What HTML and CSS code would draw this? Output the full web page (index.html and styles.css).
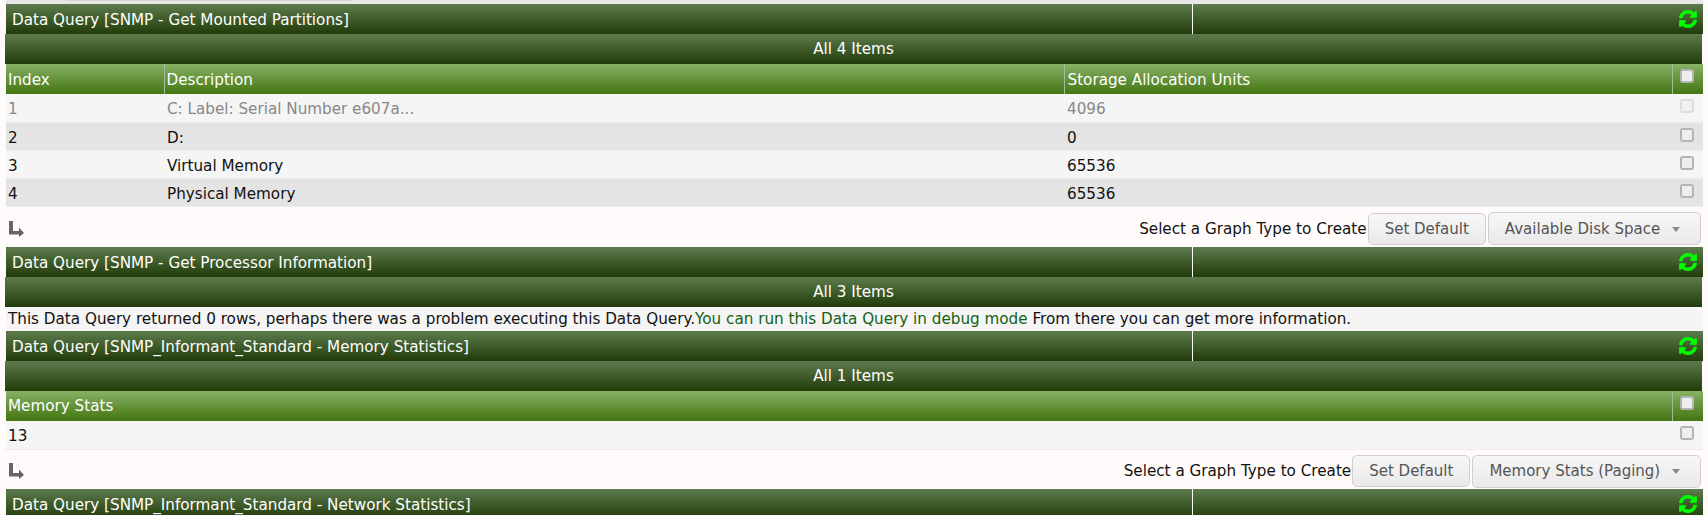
FILE: index.html
```html
<!DOCTYPE html>
<html lang="en">
<head>
  <meta charset="UTF-8">
  <meta name="viewport" content="width=device-width, initial-scale=1.0">
  <title>Data Queries</title>
  <link rel="stylesheet" href="styles.css">
</head>
<body>
  <svg class="icon-defs" width="0" height="0">
    <symbol id="sync" viewBox="0 0 512 512">
      <path d="M370.72 133.28C339.458 104.008 298.888 87.962 255.848 88c-77.458.068-144.328 53.178-162.791 126.85-1.344 5.363-6.122 9.15-11.651 9.15H24.103c-7.498 0-13.194-6.807-11.807-14.176C33.933 94.924 134.813 8 256 8c66.448 0 126.791 26.136 171.315 68.685L463.03 40.97C478.149 25.851 504 36.559 504 57.941V192c0 13.255-10.745 24-24 24H345.941c-21.382 0-32.09-25.851-16.971-40.971l41.75-41.749zM32 296h134.059c21.382 0 32.09 25.851 16.971 40.971l-41.75 41.75c31.262 29.273 71.835 45.319 114.876 45.28 77.418-.07 144.315-53.144 162.787-126.849 1.344-5.363 6.122-9.15 11.651-9.15h57.304c7.498 0 13.194 6.807 11.807 14.176C478.067 417.076 377.187 504 256 504c-66.448 0-126.791-26.136-171.315-68.685L48.97 471.03C33.851 486.149 8 475.441 8 454.059V320c0-13.255 10.745-24 24-24z"/>
    </symbol>
    <symbol id="corner" viewBox="0 0 16 16">
      <path d="M1 0h4v10h6V6.5l5 5.5-5 4v-2.500H1z"/>
    </symbol>
  </svg>

  <div class="page">
    <div class="prev-row"><div class="prev-row-edge"></div></div>

    <!-- Mounted partitions -->
    <section class="query">
      <div class="query-title">
        <div class="query-name">Data Query [SNMP - Get Mounted Partitions]</div>
        <div class="query-tools"><svg class="refresh"><use href="#sync"/></svg></div>
      </div>
      <div class="query-count">All 4 Items</div>
      <table class="items">
        <colgroup>
          <col class="col-index"><col class="col-desc"><col class="col-units"><col class="col-check">
        </colgroup>
        <tr class="head">
          <th>Index</th><th>Description</th><th>Storage Allocation Units</th>
          <th class="check"><input type="checkbox"></th>
        </tr>
        <tr class="disabled">
          <td>1</td><td>C: Label: Serial Number e607a...</td><td>4096</td>
          <td class="check"><input type="checkbox" disabled></td>
        </tr>
        <tr>
          <td>2</td><td>D:</td><td>0</td>
          <td class="check"><input type="checkbox"></td>
        </tr>
        <tr>
          <td>3</td><td>Virtual Memory</td><td>65536</td>
          <td class="check"><input type="checkbox"></td>
        </tr>
        <tr>
          <td>4</td><td>Physical Memory</td><td>65536</td>
          <td class="check"><input type="checkbox"></td>
        </tr>
      </table>
      <div class="query-actions">
        <svg class="corner"><use href="#corner"/></svg>
        <span class="actions-label">Select a Graph Type to Create</span>
        <button class="btn">Set Default</button>
        <button class="btn btn-select">Available Disk Space <span class="caret"></span></button>
      </div>
    </section>

    <!-- Processor information -->
    <section class="query">
      <div class="query-title">
        <div class="query-name">Data Query [SNMP - Get Processor Information]</div>
        <div class="query-tools"><svg class="refresh"><use href="#sync"/></svg></div>
      </div>
      <div class="query-count">All 3 Items</div>
      <div class="query-empty">This Data Query returned 0 rows, perhaps there was a problem executing this Data Query.<a href="#">You can run this Data Query in debug mode</a> From there you can get more information.</div>
    </section>

    <!-- Memory statistics -->
    <section class="query">
      <div class="query-title">
        <div class="query-name">Data Query [SNMP_Informant_Standard - Memory Statistics]</div>
        <div class="query-tools"><svg class="refresh"><use href="#sync"/></svg></div>
      </div>
      <div class="query-count">All 1 Items</div>
      <table class="items items-single">
        <colgroup>
          <col class="col-wide"><col class="col-check">
        </colgroup>
        <tr class="head">
          <th>Memory Stats</th>
          <th class="check"><input type="checkbox"></th>
        </tr>
        <tr>
          <td>13</td>
          <td class="check"><input type="checkbox"></td>
        </tr>
      </table>
      <div class="query-actions query-actions-short">
        <svg class="corner"><use href="#corner"/></svg>
        <span class="actions-label">Select a Graph Type to Create</span>
        <button class="btn">Set Default</button>
        <button class="btn btn-select">Memory Stats (Paging) <span class="caret"></span></button>
      </div>
    </section>

    <!-- Network statistics -->
    <section class="query">
      <div class="query-title">
        <div class="query-name">Data Query [SNMP_Informant_Standard - Network Statistics]</div>
        <div class="query-tools"><svg class="refresh"><use href="#sync"/></svg></div>
      </div>
    </section>
  </div>
</body>
</html>
```

FILE: styles.css
```css
* {
  margin: 0;
  padding: 0;
  box-sizing: border-box;
}

html, body {
  height: 100%;
  overflow: hidden;
}

body {
  background-color: #fffbfa;
  color: #111;
  font-family: "DejaVu Sans", Verdana, sans-serif;
  font-size: 15.2px;
}

.icon-defs {
  position: absolute;
}

.page {
  width: 1698px;
  margin-left: 5px;
}

.prev-row {
  height: 4px;
  margin-left: 1px;
  background-color: #e6e6e6;
}

.prev-row-edge {
  width: 286px;
  height: 1px;
  margin-left: 60px;
  background-color: #d6d6d6;
}

/* Query title bar */
.query-title {
  display: grid;
  grid-template-columns: 1186px 1fr;
  height: 30px;
  margin-left: 1px;
  background: linear-gradient(#5d7b4d, #213c09);
  color: #fff;
  line-height: 32px;
}

.query-name {
  height: 30px;
  padding-left: 6px;
}

.query-tools {
  display: flex;
  justify-content: flex-end;
  align-items: center;
  padding-right: 6px;
  border-left: 1px solid #fff;
}

.refresh {
  width: 18px;
  height: 18px;
  fill: #00ff00;
  stroke: #00ff00;
  stroke-width: 24px;
}

.query-count {
  height: 30px;
  margin-right: 1px;
  background: linear-gradient(#5d7b4d, #213c09);
  color: #fff;
  line-height: 31px;
  text-align: center;
}

/* Item tables */
.items {
  width: 1697px;
  margin-left: 1px;
  border-collapse: collapse;
  table-layout: fixed;
}

.col-index { width: 158px; }
.col-desc { width: 900px; }
.col-check { width: 31px; }

.items th,
.items td {
  padding: 2px 2px 0;
  text-align: left;
  font-weight: normal;
}

.items th {
  height: 30px;
  border-left: 1px solid #a9b8a0;
  background: linear-gradient(#87b166, #437510);
  color: #fff;
}

.items th:first-child {
  border-left: none;
}

.items-single th {
  padding-top: 0;
}

.items td {
  height: 28px;
  padding-top: 3px;
  border-bottom: 1px solid #ececec;
}

.items-single td {
  height: 29px;
}

.items tr:nth-child(even) {
  background-color: #f5f5f5;
}

.items tr:nth-child(odd) {
  background-color: #e4e4e4;
}

.items td:nth-child(2) {
  padding-left: 3px;
}

.items th:nth-child(3),
.items td:nth-child(3) {
  padding-left: 3px;
}

.items .disabled td {
  color: #888;
}

.items .check {
  padding: 5px 0 0 7px;
  vertical-align: top;
}

.items td.check {
  padding-left: 8px;
}

input[type="checkbox"] {
  display: block;
  width: 14px;
  height: 14px;
  appearance: none;
  border: 2px solid #b4b4b4;
  border-radius: 3px;
  background-color: #eeeeee;
}

input[type="checkbox"]:disabled {
  border-color: #dddddd;
  background-color: #f0f0f0;
}

/* Actions under a table */
.query-actions {
  display: flex;
  justify-content: flex-end;
  align-items: center;
  height: 40px;
  margin-left: 1px;
  padding-top: 4px;
  padding-right: 2px;
}

.query-actions-short {
  height: 39px;
  padding-top: 3px;
}

.corner {
  width: 16px;
  height: 16px;
  margin-right: auto;
  margin-left: 2px;
  fill: #666;
}

.actions-label {
  margin-right: 1px;
}

.btn {
  height: 32px;
  padding: 0 16px;
  border: 1px solid #cfcfcf;
  border-radius: 5px;
  background: linear-gradient(#f7f7f7, #e9e9e9);
  color: #555;
  font-family: inherit;
  font-size: 15px;
}

.btn-select {
  height: 33px;
  margin-left: 2px;
  padding-right: 20px;
}

.caret {
  display: inline-block;
  margin-left: 7px;
  vertical-align: middle;
  border-top: 5px solid #888;
  border-left: 4.5px solid transparent;
  border-right: 4.5px solid transparent;
}

/* Empty query message */
.query-empty {
  height: 24px;
  margin-left: 1px;
  padding-left: 2px;
  background-color: #f5f5f5;
  line-height: 25px;
}

.query-empty a {
  color: #146014;
  text-decoration: none;
}
```
